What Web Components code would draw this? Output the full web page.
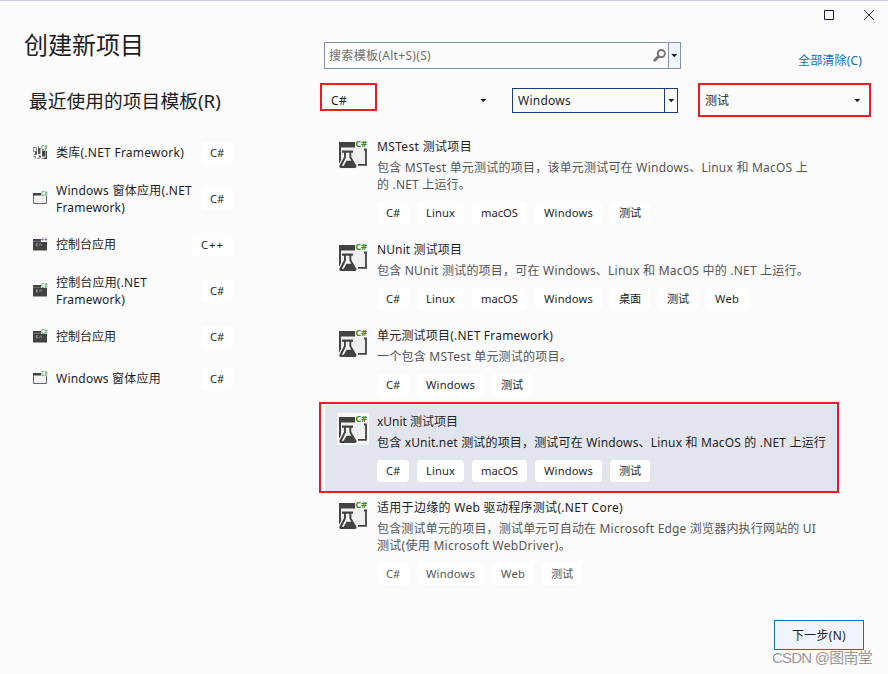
<!DOCTYPE html>
<html lang="zh-CN">
<head>
<meta charset="utf-8">
<title>创建新项目</title>
<style>
html, body { margin: 0; height: 100%; overflow: hidden; }
body {
  background: #fbfbfc;
  color: #1e1e1e;
  font: 12px/17px "Noto Sans", "Noto Sans CJK SC", sans-serif;
}
</style>
</head>
<body>
<new-project-dialog></new-project-dialog>

<script>
/**
 * Inline text that spreads its letters over a given advance width
 */
class TextRun extends HTMLElement {
  constructor () {
    super()
    this.attachShadow({ mode: 'open' }).innerHTML = `
      <style>
      :host { display: flex; white-space: nowrap; }
      span { flex: none; }
      </style>
      <span><slot></slot></span>`
  }

  connectedCallback () {
    const width = Number(this.getAttribute('width'))
    if (!width) { return }
    const span = this.shadowRoot.querySelector('span')
    const natural = span.getBoundingClientRect().width
    span.style.letterSpacing = (width - natural) / this.textContent.length + 'px'
    this.style.width = width + 'px'
  }
}

// text width of the known tags
const TAG_WIDTH = { 'C#': 14, 'C++': 23, Linux: 29, macOS: 37, Windows: 49, Web: 24, 测试: 22, 桌面: 22 }

class TagPill extends HTMLElement {
  connectedCallback () {
    const name = this.getAttribute('name')
    this.attachShadow({ mode: 'open' }).innerHTML = `
      <style>
      :host {
        display: block;
        flex: none;
        padding: 0 9px;
        border-radius: 4px;
        background: #fff;
        font-size: 11.2px;
        line-height: 22px;
      }
      </style>
      <text-run width="${TAG_WIDTH[name]}">${name}</text-run>`
  }
}

const badge = (text, color) => `
  <path d="M8 0h7v5H8z" fill="#fbfbfc"/>
  <text x="8" y="4.800" font-family="Noto Sans" font-size="7" font-weight="700" fill="${color}" textLength="6.500" lengthAdjust="spacingAndGlyphs">${text}</text>`

const ICONS = {
  library: `
    <path d="M.5 2.500h3v4h-3zM5.500 1v3M1 9.500h2.500M.500 11.500h2v2M4 13.500h2.500M8.500 13.500h1.500" fill="none" stroke="#888"/>
    <path d="M5 3h2.500v6H5zM2 6.500h2v3H2zM6 10.500h2v2H6z" fill="#555"/>
    <path d="M9 5.500h3.500v6H9zM13 6h1v8h-3.500v-1.500H13z" fill="#424242"/>
    ${badge('C#', '#5aa657')}`,
  form: `
    <path d="M.5 2.500h13v10H.5z" fill="#f3f3f3" stroke="#666"/>
    <path d="M0 2h8v2.500H0z" fill="#424242"/>
    ${badge('C#', '#5aa657')}`,
  console: `
    <path d="M0 2h8v2h6v9.500H0z" fill="#424242"/>
    <path d="M0 4.300h14" stroke="#999" stroke-width=".6"/>
    <path d="M5 6.800H3.300v2H5M6.500 6.800v.6M6.500 8.200v.6M7.600 6.500l.9 2.400" fill="none" stroke="#bbb" stroke-width=".7"/>
    ${badge('C#', '#5aa657')}`
}
ICONS.consolecpp = ICONS.console.replace(badge('C#', '#5aa657'), badge('++', '#8a4fa0'))

class RecentTemplate extends HTMLElement {
  connectedCallback () {
    this.attachShadow({ mode: 'open' }).innerHTML = `
      <style>
      :host {
        display: flex;
        align-items: center;
        box-sizing: border-box;
        height: 42px;
      }
      :host([tall]) { height: 50px; }
      svg { width: 15px; height: 15px; margin: 0 8px 1px 0; flex: none; overflow: visible; }
      .name { flex: 1; min-width: 0; padding-bottom: 1px; }
      :host([tall]) .name { padding-bottom: 0; }
      </style>
      <svg viewBox="0 0 15 15">${ICONS[this.getAttribute('icon')]}</svg>
      <div class="name"><slot></slot></div>
      <tag-pill name="${this.getAttribute('tag')}"></tag-pill>`
  }
}

class DropArrow extends HTMLElement {
  connectedCallback () {
    this.attachShadow({ mode: 'open' }).innerHTML = `
      <style>
      :host { display: block; width: 7px; height: 3px; flex: none; }
      svg { display: block; }
      </style>
      <svg width="7" height="4" viewBox="0 0 7 4"><path d="M.3 0h6L3.300 3.200z" fill="#1e1e1e"/></svg>`
  }
}

class FilterBox extends HTMLElement {
  connectedCallback () {
    this.attachShadow({ mode: 'open' }).innerHTML = `
      <style>
      :host {
        display: flex;
        box-sizing: border-box;
        height: 25px;
        border: 1px solid transparent;
        background: #fcfcfd;
      }
      :host([active]) { border-color: #1b3a78; }
      .value { flex: 1; padding-left: 8px; line-height: 23px; }
      :host([active]) .value { padding-left: 7px; }
      .drop {
        display: flex;
        align-items: center;
        justify-content: center;
        width: 12px;
        border-left: 1px solid transparent;
      }
      :host([active]) .drop { border-color: #1b3a78; }
      </style>
      <div class="value"><slot></slot></div>
      <div class="drop"><drop-arrow></drop-arrow></div>`
  }
}

class SearchBox extends HTMLElement {
  connectedCallback () {
    this.attachShadow({ mode: 'open' }).innerHTML = `
      <style>
      :host {
        display: flex;
        align-items: center;
        box-sizing: border-box;
        width: 357px;
        height: 27px;
        border: 1px solid #8591ab;
        background: #fcfcfd;
        color: #6d6d6d;
      }
      .hint { flex: 1; padding-left: 4px; }
      .drop {
        display: flex;
        align-items: center;
        justify-content: center;
        align-self: stretch;
        width: 11px;
        margin-left: 2px;
        border-left: 1px solid #8591ab;
        background: #f0f4fc;
      }
      </style>
      <div class="hint"><slot></slot></div>
      <svg width="13" height="13" viewBox="0 0 13 13" fill="none" stroke="#717171">
        <circle cx="8.300" cy="4.600" r="3.600" stroke-width="1.900"/>
        <path d="M5.700 7.300L1 12" stroke-width="2.700"/>
      </svg>
      <div class="drop"><drop-arrow></drop-arrow></div>`
  }
}

class TemplateItem extends HTMLElement {
  connectedCallback () {
    const tags = this.getAttribute('tags').split(' ')
    this.attachShadow({ mode: 'open' }).innerHTML = `
      <style>
      :host { display: flex; padding: 8px 0 9px 12px; }
      :host([selected]) { background: #e2e5ed; }
      svg { width: 32px; height: 32px; margin-right: 8px; flex: none; }
      :host([selected]) svg { background: #f6f6f6; }
      .title { height: 21px; line-height: 18px; }
      .desc { color: #555; }
      :host([selected]) .desc { color: #1e1e1e; }
      .tags { display: flex; gap: 8px; padding-top: 9px; }
      :host([faded]) .tags { color: #555; }
      </style>
      <svg viewBox="0 0 32 32">
        <path d="M4 7h24v20H4z" fill="#f0f0f0"/>
        <path d="M2 4h16v5.500H4V22l-2 4z" fill="#424242"/>
        <path d="M27 11.500h2v15.300h-8" fill="none" stroke="#424242" stroke-width="1.800"/>
        <path d="M5 12.500h11v2.200h-1.700V19l5 8.600q.7 2.400-1.500 2.400H4q-2.200 0-1.500-2.400L7 19v-4.300H5z" fill="#424242" stroke="#f4f4f4" stroke-width="1.800" paint-order="stroke"/>
        <path d="M8.900 14.700h3.500v4.800l1.900 3.300H9.500l-2.800 4.900-1.900.3 4.100-8.500z" fill="#f4f4f4"/>
        <rect x="18" y="1" width="14" height="9" fill="#f8f8f8"/>
        <text x="18.200" y="9" font-family="Open Sans" font-size="9.500" font-weight="700" fill="#388a34" textLength="12" lengthAdjust="spacing">C#</text>
      </svg>
      <div>
        <div class="title"><slot name="title"></slot></div>
        <div class="desc"><slot></slot></div>
        <div class="tags">${tags.map(name => `<tag-pill name="${name}"></tag-pill>`).join('')}</div>
      </div>`
  }
}

const template = document.createElement('template')
template.innerHTML = /* HTML */
`
<style>
:host {
  display: block;
  box-sizing: border-box;
  position: relative;
  width: 888px;
  height: 674px;
  border-top: 1px solid #cccce0;
}
main { display: grid; grid-template-columns: 209px 547px; column-gap: 91px; padding-left: 24px; }
h1, h2 { margin: 0; font-weight: 400; }
h1 { padding-top: 27px; font-size: 24px; line-height: 34px; }
h2 { padding: 26px 0 0 5px; font-size: 18.700px; line-height: 26px; }
.recent { padding: 18px 0 0 9px; }
.caption { display: flex; justify-content: flex-end; gap: 30px; height: 41px; padding: 9px 4px 0 0; box-sizing: border-box; margin-right: -7px; }
.search { display: flex; justify-content: space-between; }
.clear { margin: 10px 9px 0 0; color: #0e70c0; }
.filters { display: grid; grid-template-columns: 166px 166px 166px; column-gap: 22px; padding-top: 19px; }
.filters :last-child { margin-left: -2px; margin-right: 2px; }
.list { width: 512px; margin: 17px 0 0 1px; }
footer { display: flex; justify-content: flex-end; padding: 26px 24px 0 0; }
button {
  width: 90px;
  height: 30px;
  padding: 0 0 0 17px;
  border: 1px solid #0e70c0;
  background: #f0f4fc;
  color: #1e1e1e;
  font: inherit;
  text-align: left;
}
/* red markers and watermark laid over the dialog */
.mark { position: absolute; box-sizing: border-box; border: 2px solid #ed1c24; }
.watermark { position: absolute; left: 772px; top: 647px; color: #999; font: 15px/20px "Liberation Sans", "Noto Sans CJK SC", sans-serif; }
</style>
<main>
  <aside>
    <h1><text-run width="120">创建新项目</text-run></h1>
    <h2><text-run width="192">最近使用的项目模板(R)</text-run></h2>
    <div class="recent">
      <recent-template icon="library" tag="C#"><text-run width="128">类库(.NET Framework)</text-run></recent-template>
      <recent-template tall icon="form" tag="C#"><text-run width="136">Windows 窗体应用(.NET</text-run><text-run width="69">Framework)</text-run></recent-template>
      <recent-template icon="consolecpp" tag="C++"><text-run width="60">控制台应用</text-run></recent-template>
      <recent-template tall icon="console" tag="C#"><text-run width="91">控制台应用(.NET</text-run><text-run width="69">Framework)</text-run></recent-template>
      <recent-template icon="console" tag="C#"><text-run width="60">控制台应用</text-run></recent-template>
      <recent-template icon="form" tag="C#"><text-run width="105">Windows 窗体应用</text-run></recent-template>
    </div>
  </aside>
  <section>
    <div class="caption">
      <svg width="10" height="10"><path d="M.5.5h9v9h-9z" fill="none" stroke="#16213f"/></svg>
      <svg width="10" height="10"><path d="M0 0l10 10M10 0L0 10" stroke="#30384f"/></svg>
    </div>
    <div class="search">
      <search-box><text-run width="102">搜索模板(Alt+S)(S)</text-run></search-box>
      <text-run class="clear" width="64">全部清除(C)</text-run>
    </div>
    <div class="filters">
      <filter-box><text-run width="16">C#</text-run></filter-box>
      <filter-box active><text-run width="53">Windows</text-run></filter-box>
      <filter-box><text-run width="24">测试</text-run></filter-box>
    </div>
    <div class="list">
      <template-item tags="C# Linux macOS Windows 测试">
        <text-run slot="title" width="95">MSTest 测试项目</text-run>
        <text-run width="431">包含 MSTest 单元测试的项目，该单元测试可在 Windows、Linux 和 MacOS 上</text-run>
        <text-run width="94">的 .NET 上运行。</text-run>
      </template-item>
      <template-item tags="C# Linux macOS Windows 桌面 测试 Web">
        <text-run slot="title" width="85">NUnit 测试项目</text-run>
        <text-run width="432">包含 NUnit 测试的项目，可在 Windows、Linux 和 MacOS 中的 .NET 上运行。</text-run>
      </template-item>
      <template-item tags="C# Windows 测试">
        <text-run slot="title" width="176">单元测试项目(.NET Framework)</text-run>
        <text-run width="195">一个包含 MSTest 单元测试的项目。</text-run>
      </template-item>
      <template-item selected tags="C# Linux macOS Windows 测试">
        <text-run slot="title" width="81">xUnit 测试项目</text-run>
        <text-run width="449">包含 xUnit.net 测试的项目，测试可在 Windows、Linux 和 MacOS 的 .NET 上运行</text-run>
      </template-item>
      <template-item faded tags="C# Windows Web 测试">
        <text-run slot="title" width="246">适用于边缘的 Web 驱动程序测试(.NET Core)</text-run>
        <text-run width="439">包含测试单元的项目，测试单元可自动在 Microsoft Edge 浏览器内执行网站的 UI</text-run>
        <text-run width="194">测试(使用 Microsoft WebDriver)。</text-run>
      </template-item>
    </div>
  </section>
</main>
<footer><button><text-run width="54">下一步(N)</text-run></button></footer>
<div class="mark" style="left:320px;top:82px;width:57px;height:28px"></div>
<div class="mark" style="left:698px;top:82px;width:173px;height:34px"></div>
<div class="mark" style="left:319px;top:401px;width:520px;height:91px"></div>
<text-run class="watermark" width="100">CSDN @图南堂</text-run>
`

class NewProjectDialog extends HTMLElement {
  constructor () {
    super()
    this.attachShadow({ mode: 'open' })
    this.shadowRoot.appendChild(template.content.cloneNode(true))
  }
}

window.customElements.define('tag-pill', TagPill)
window.customElements.define('drop-arrow', DropArrow)
window.customElements.define('recent-template', RecentTemplate)
window.customElements.define('filter-box', FilterBox)
window.customElements.define('search-box', SearchBox)
window.customElements.define('template-item', TemplateItem)
window.customElements.define('new-project-dialog', NewProjectDialog)
// last, so every run is measured with its final font
window.customElements.define('text-run', TextRun)
</script>
</body>
</html>
